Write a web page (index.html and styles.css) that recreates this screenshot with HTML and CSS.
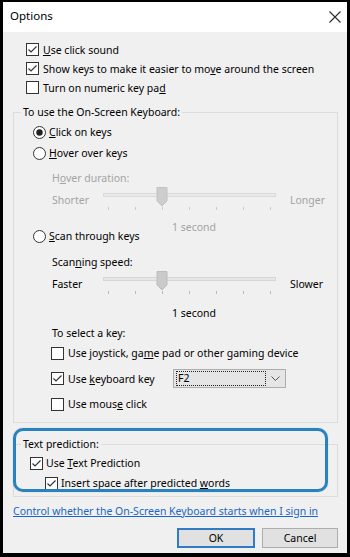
FILE: index.html
```html
<!DOCTYPE html>
<html>
<head>
<meta charset="utf-8">
<title>Options</title>
<link rel="stylesheet" href="styles.css">
</head>
<body>
<div class="window">
  <div class="titlebar">
    <span class="title">Options</span>
    <svg class="close" width="12" height="12" viewBox="0 0 12 12"><path d="M0.5 0.5L11.5 11.5M11.5 0.5L0.5 11.5" stroke="#2b2b2b" stroke-width="1.1" fill="none"/></svg>
  </div>
  <div class="content">
    <div class="top-checks">
      <label class="check-row"><svg class="cb" width="13" height="13" viewBox="0 0 13 13"><rect x="0.5" y="0.5" width="12" height="12" fill="#fff" stroke="#333"/><path d="M2.5 6.5L5 9L10.5 3.5" fill="none" stroke="#333" stroke-width="1.2"/></svg><span><u>U</u>se click sound</span></label>
      <label class="check-row"><svg class="cb" width="13" height="13" viewBox="0 0 13 13"><rect x="0.5" y="0.5" width="12" height="12" fill="#fff" stroke="#333"/><path d="M2.5 6.5L5 9L10.5 3.5" fill="none" stroke="#333" stroke-width="1.2"/></svg><span>Show keys to make it easier to mo<u>v</u>e around the screen</span></label>
      <label class="check-row"><svg class="cb" width="13" height="13" viewBox="0 0 13 13"><rect x="0.5" y="0.5" width="12" height="12" fill="#fff" stroke="#333"/></svg><span>Turn on numeric key pa<u>d</u></span></label>
    </div>

    <fieldset class="group osk">
      <legend>To use the On-Screen Keyboard:</legend>
      <div class="osk-body">
        <label class="opt opt-click"><svg class="rb" width="13" height="13" viewBox="0 0 13 13"><circle cx="6.5" cy="6.5" r="6" fill="#fff" stroke="#333"/><circle cx="6.5" cy="6.5" r="3.2" fill="#222"/></svg><span><u>C</u>lick on keys</span></label>
        <label class="opt opt-hover"><svg class="rb" width="13" height="13" viewBox="0 0 13 13"><circle cx="6.5" cy="6.5" r="6" fill="#fff" stroke="#333"/></svg><span><u>H</u>over over keys</span></label>
        <div class="sub-label disabled hover-label">H<u>o</u>ver duration:</div>
        <div class="slider-row disabled">
          <span class="slider-min">Shorter</span>
          <svg class="slider" width="173" height="23" viewBox="0 0 173 23">
            <rect x="0.5" y="6.5" width="172" height="3" fill="#e9e9e9" stroke="#dadada"/>
            <polygon points="54,0.5 64,0.5 64,14 59,19 54,14" fill="#cdcdcd" stroke="#c2c2c2"/>
            <g stroke="#c9c9c9"><path d="M5.5 20v3M32.5 20v3M59.5 20v3M86.5 20v3M113.5 20v3M140.5 20v3M167.5 20v3"/></g>
          </svg>
          <span class="slider-max">Longer</span>
        </div>
        <div class="slider-value disabled value-hover">1 second</div>
        <label class="opt opt-scan"><svg class="rb" width="13" height="13" viewBox="0 0 13 13"><circle cx="6.5" cy="6.5" r="6" fill="#fff" stroke="#333"/></svg><span><u>S</u>can through keys</span></label>
        <div class="sub-label scan-label">Scan<u>n</u>ing speed:</div>
        <div class="slider-row">
          <span class="slider-min">Faster</span>
          <svg class="slider" width="173" height="23" viewBox="0 0 173 23">
            <rect x="0.5" y="6.5" width="172" height="3" fill="#e7e7e7" stroke="#d6d6d6"/>
            <polygon points="54,0.5 64,0.5 64,14 59,19 54,14" fill="#cacaca" stroke="#bdbdbd"/>
            <g stroke="#b8b8b8"><path d="M5.5 20v3M32.5 20v3M59.5 20v3M86.5 20v3M113.5 20v3M140.5 20v3M167.5 20v3"/></g>
          </svg>
          <span class="slider-max">Slower</span>
        </div>
        <div class="slider-value value-scan">1 second</div>
        <div class="sub-label select-label">To select a key:</div>
        <label class="sub-check joystick"><svg class="cb" width="13" height="13" viewBox="0 0 13 13"><rect x="0.5" y="0.5" width="12" height="12" fill="#fff" stroke="#333"/></svg><span>Use joystick, ga<u>m</u>e pad or other gaming device</span></label>
        <div class="sub-check keyboard">
          <label class="keyboard-label"><svg class="cb" width="13" height="13" viewBox="0 0 13 13"><rect x="0.5" y="0.5" width="12" height="12" fill="#fff" stroke="#333"/><path d="M2.5 6.5L5 9L10.5 3.5" fill="none" stroke="#333" stroke-width="1.2"/></svg><span>Use <u>k</u>eyboard key</span></label>
          <div class="combo">
            <span class="combo-focus">F2</span>
            <svg class="chevron" width="9" height="5" viewBox="0 0 9 5"><path d="M0.5 0.5L4.5 4.5L8.5 0.5" fill="none" stroke="#555"/></svg>
          </div>
        </div>
        <label class="sub-check mouse"><svg class="cb" width="13" height="13" viewBox="0 0 13 13"><rect x="0.5" y="0.5" width="12" height="12" fill="#fff" stroke="#333"/></svg><span>Use mous<u>e</u> click</span></label>
      </div>
    </fieldset>

    <div class="prediction-wrap">
      <fieldset class="group prediction">
        <legend>Text prediction:</legend>
        <div class="prediction-body">
          <label class="pred-check pred-use"><svg class="cb" width="13" height="13" viewBox="0 0 13 13"><rect x="0.5" y="0.5" width="12" height="12" fill="#fff" stroke="#333"/><path d="M2.5 6.5L5 9L10.5 3.5" fill="none" stroke="#333" stroke-width="1.2"/></svg><span>Use <u>T</u>ext Prediction</span></label>
          <label class="pred-check pred-space"><svg class="cb" width="13" height="13" viewBox="0 0 13 13"><rect x="0.5" y="0.5" width="12" height="12" fill="#fff" stroke="#333"/><path d="M2.5 6.5L5 9L10.5 3.5" fill="none" stroke="#333" stroke-width="1.2"/></svg><span>Insert space after predicted <u>w</u>ords</span></label>
        </div>
      </fieldset>
      <div class="callout"></div>
    </div>

    <a class="startup-link" href="#">Control whether the On-Screen Keyboard starts when I sign in</a>

    <div class="buttons">
      <button class="btn btn-ok">OK</button>
      <button class="btn btn-cancel">Cancel</button>
    </div>
  </div>
</div>
</body>
</html>
```

FILE: styles.css
```css
* { box-sizing: border-box; }

html, body {
  margin: 0;
  padding: 0;
}

body {
  width: 350px;
  height: 557px;
  overflow: hidden;
  background: #000;
  font-family: "Noto Sans", "Liberation Sans", sans-serif;
  font-size: 10.5px;
  color: #000;
}

.window {
  margin: 2px 3px 4px 3px;
  height: 551px;
  background: #f0f0f0;
  display: flex;
  flex-direction: column;
}

.titlebar {
  height: 30px;
  flex: none;
  background: #fff;
  display: flex;
  align-items: center;
  justify-content: space-between;
  padding: 0 6px 0 7px;
}

.title {
  font-size: 11.5px;
  line-height: 16px;
  margin-top: -2px;
}

.close { display: block; }

.content {
  flex: 1;
  display: flex;
  flex-direction: column;
  padding: 8px 9px 5px 10px;
}

svg { display: block; flex: none; }

u { text-decoration: underline; text-underline-offset: 1px; }

/* top check boxes */
.top-checks { padding-left: 13px; }

.check-row {
  display: flex;
  align-items: center;
  gap: 4px;
  height: 19px;
}

/* group boxes */
.group {
  margin: 0;
  min-width: 0;
  border: 1px solid #dcdcdc;
  padding: 0;
}

.group legend {
  margin-left: 7px;
  padding: 0 2px;
  line-height: 16px;
}

.osk {
  margin-top: 7px;
  padding-bottom: 10px;
}

.osk-body {
  display: flex;
  flex-direction: column;
  padding-left: 19px;
}

.opt {
  display: flex;
  align-items: center;
  gap: 3px;
  height: 16px;
  line-height: 16px;
}

.opt-click { margin-top: 4px; }
.opt-hover { margin-top: 5px; }
.opt-scan { margin-top: -7px; width: 120px; }

.sub-label {
  margin-left: 19px;
  line-height: 16px;
  height: 16px;
}

.hover-label { margin-top: 9px; }
.scan-label { margin-top: 10px; }
.select-label { margin-top: 4px; }

.disabled { color: #a3a3a3; }

.slider-row {
  display: flex;
  align-items: center;
  margin-left: 19px;
  margin-top: 1px;
}

.slider-min {
  width: 51px;
  padding-top: 3px;
  line-height: 16px;
}

.slider-max {
  margin-left: 14px;
  padding-top: 3px;
  line-height: 16px;
}

.slider-value {
  margin-left: 139px;
  line-height: 16px;
  height: 16px;
  width: 60px;
}

.value-hover { margin-top: 9px; }
.value-scan { margin-top: 11px; }

.sub-check {
  display: flex;
  align-items: center;
  gap: 4px;
  margin-left: 18px;
  line-height: 16px;
  height: 16px;
}

.joystick { margin-top: 4px; }
.mouse { margin-top: 8px; }

.keyboard {
  margin-top: 8px;
  height: 19px;
  gap: 0;
}

.keyboard-label {
  width: 122px;
  display: flex;
  align-items: center;
  gap: 4px;
}

.combo {
  width: 113px;
  height: 19px;
  border: 1px solid #adadad;
  background: #e5e5e5;
  display: flex;
  align-items: center;
  padding: 0 2px;
}

.combo-focus {
  width: 90px;
  height: 15px;
  border: 1px dotted #222;
  line-height: 13px;
  padding-left: 1px;
}

.chevron { margin-left: auto; margin-right: 3px; }

/* text prediction */
.prediction-wrap {
  position: relative;
  margin-top: 13px;
}

.prediction { padding-bottom: 5px; }

.prediction-body {
  display: flex;
  flex-direction: column;
  padding-left: 16px;
}

.pred-check {
  display: flex;
  align-items: center;
  gap: 3px;
  height: 16px;
  line-height: 16px;
}

.pred-use { margin-top: 3px; }
.pred-space { margin-top: 4px; margin-left: 15px; }

.callout {
  position: absolute;
  left: 0;
  top: -8px;
  width: 315px;
  height: 64px;
  border: 3px solid #2a82bd;
  border-radius: 10px;
  box-shadow: 0 0 1px rgba(42, 130, 189, 0.6);
  pointer-events: none;
}

.startup-link {
  margin-top: 6px;
  line-height: 16px;
  color: #1a66c2;
  text-decoration: underline;
  align-self: flex-start;
}

/* buttons */
.buttons {
  display: flex;
  justify-content: flex-end;
  gap: 7px;
  margin-top: 9px;
}

.btn {
  height: 20px;
  margin: 0;
  padding: 0;
  font-family: inherit;
  font-size: inherit;
  color: #000;
  background: #e1e1e1;
  border: 1px solid #adadad;
}

.btn-ok {
  width: 78px;
  border: 2px solid #2f7cc4;
}

.btn-cancel { width: 76px; }
```
